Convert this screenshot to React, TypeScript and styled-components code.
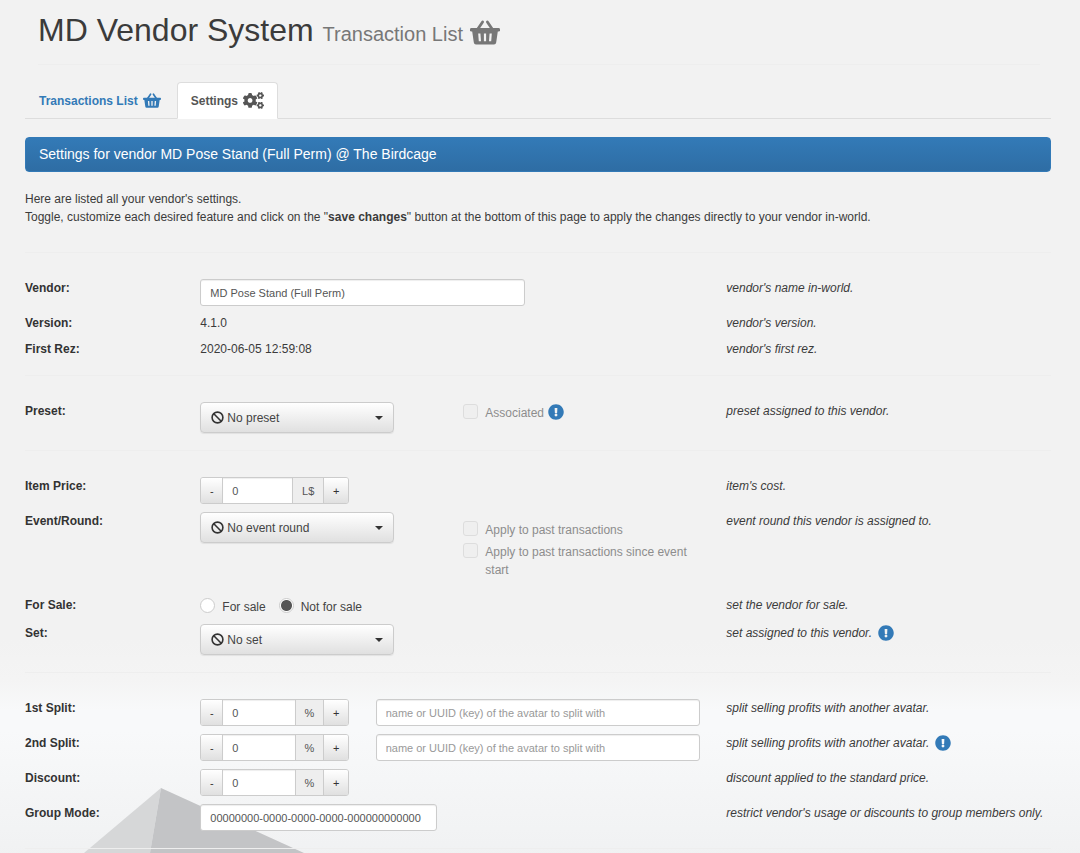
import React, { useState } from "react";
import styled, { createGlobalStyle } from "styled-components";
import { FaCogs, FaExclamationCircle } from "react-icons/fa";

const GlobalStyle = createGlobalStyle`
  *, *::before, *::after { box-sizing: border-box; }
  body {
    margin: 0;
    background: #f2f2f2;
    color: #3b3b3b;
    font-family: "Liberation Sans", Arial, Helvetica, sans-serif;
    font-size: 12px;
    line-height: 18px;
  }
  input, select, button { font-family: inherit; }
`;

const Page = styled.div`
  position: relative;
  padding: 13px 29px 4px 25px;
  overflow: hidden;
  background: linear-gradient(#f2f2f2 0, #f2f2f2 640px, #f4f4f4 680px, #f8f9fa 710px, #f8f9fa 730px, #f0f1f2 860px);
`;

const Backdrop = styled.svg`
  position: absolute;
  left: 84px;
  bottom: 0;
  width: 224px;
  height: 66px;
`;

const Content = styled.main`
  position: relative;
`;

const PageHeader = styled.header`
  margin: 0 11px 17px 13px;
  padding-bottom: 16px;
  border-bottom: 1px solid #eee;
`;

const Title = styled.h1`
  height: 35px;
  margin: 0;
  font-size: 32px;
  font-weight: 400;
  line-height: 35px;
  white-space: nowrap;
`;

const Subtitle = styled.small`
  font-size: 20px;
  color: #777;
  svg { margin-left: 7px; vertical-align: -4px; }
`;

const Tabs = styled.nav`
  display: flex;
  border-bottom: 1px solid #ddd;
`;

const Tab = styled.a<{ $active?: boolean }>`
  display: flex;
  align-items: center;
  gap: 5px;
  height: 37px;
  margin: 0 2px -1px 0;
  padding: 0 13px;
  border: 1px solid ${(p) => (p.$active ? "#ddd" : "transparent")};
  border-bottom-color: ${(p) => (p.$active ? "#fff" : "transparent")};
  border-radius: 4px 4px 0 0;
  background: ${(p) => (p.$active ? "#fff" : "transparent")};
  color: ${(p) => (p.$active ? "#555" : "#337ab7")};
  font-size: 12px;
  font-weight: 700;
  text-decoration: none;
  svg { flex: none; }
`;

const Heading = styled.h2`
  margin: 18px 0 18px;
  padding: 0 13px;
  border: 1px solid #337ab7;
  border-radius: 4px;
  background: linear-gradient(#337ab7, #2e6da4);
  color: #fff;
  font-size: 14px;
  font-weight: 400;
  line-height: 33px;
`;

const Intro = styled.p`
  margin: 0 0 26px;
`;

const Rule = styled.hr`
  height: 1px;
  margin: 17px 0 26px;
  border: 0;
  background: #eee;
  &:last-child { margin-bottom: 0; }
`;

const Row = styled.div<{ $min?: number }>`
  display: grid;
  grid-template-columns: repeat(12, minmax(0, 1fr));
  column-gap: 26px;
  align-items: start;
  min-height: ${(p) => p.$min ?? 18}px;
  margin-bottom: 8px;
`;

const Cell = styled.div<{ $from: number; $span: number; $top?: number }>`
  grid-column: ${(p) => p.$from} / span ${(p) => p.$span};
  padding-top: ${(p) => p.$top ?? 0}px;
`;

const Name = styled.label`
  grid-column: 1 / span 2;
  color: #333;
  font-weight: 700;
`;

const Hint = styled.em`
  grid-column: 9 / span 4;
  display: flex;
  align-items: center;
  gap: 6px;
  white-space: nowrap;
`;

const TextInput = styled.input`
  display: block;
  width: 100%;
  height: 27px;
  padding: 0 9px;
  border: 1px solid #ccc;
  border-radius: 3px;
  background: #fff;
  box-shadow: inset 0 1px 1px rgba(0, 0, 0, 0.07);
  color: #555;
  font-size: 11px;
  &::placeholder { color: #999; opacity: 1; }
`;

const SelectBox = styled.div`
  position: relative;
  width: 194px;
`;

const Select = styled.select`
  appearance: none;
  display: block;
  width: 100%;
  height: 31px;
  padding: 0 26px;
  border: 1px solid #ccc;
  border-radius: 4px;
  background: linear-gradient(#fff, #e0e0e0);
  box-shadow: 0 1px 1px rgba(0, 0, 0, 0.07);
  color: #444;
  font-size: 12px;
`;

const BanMark = styled.svg`
  position: absolute;
  left: 11px;
  top: 9px;
  pointer-events: none;
`;

const Caret = styled.span`
  position: absolute;
  right: 11px;
  top: 14px;
  border: 4px solid transparent;
  border-top-color: #333;
  border-bottom: 0;
  pointer-events: none;
`;

const Group = styled.div`
  display: flex;
  width: 149px;
  height: 27px;
  border: 1px solid #ccc;
  border-radius: 3px;
  overflow: hidden;
`;

const StepButton = styled.button`
  flex: 0 0 auto;
  padding: 0 8px;
  border: 0;
  background: linear-gradient(#fff, #e0e0e0);
  color: #333;
  font-size: 11px;
  &:first-child { width: 22px; border-right: 1px solid #ccc; }
  &:last-child { width: 25px; border-left: 1px solid #ccc; }
`;

const Amount = styled.input`
  flex: 1 1 0;
  min-width: 0;
  padding: 0 9px;
  border: 0;
  background: #fff;
  box-shadow: inset 0 1px 1px rgba(0, 0, 0, 0.07);
  color: #555;
  font-size: 11px;
`;

const Unit = styled.span`
  padding: 0 9px;
  border-left: 1px solid #ccc;
  background: #eee;
  color: #555;
  font-size: 11px;
  line-height: 26px;
`;

const Choice = styled.label<{ $disabled?: boolean }>`
  display: flex;
  align-items: flex-start;
  gap: 7px;
  margin-bottom: 4px;
  color: ${(p) => (p.$disabled ? "#8d8d8d" : "#444")};
  svg { flex: none; margin-left: -3px; }
`;

const Tick = styled.input`
  appearance: none;
  flex: none;
  width: 15px;
  height: 15px;
  margin: 0;
  border: 1px solid #ddd;
  border-radius: 3px;
  background: #efefef;
`;

const Radio = styled.input`
  appearance: none;
  flex: none;
  width: 15px;
  height: 15px;
  margin: 0;
  border: 1px solid #ccc;
  border-radius: 50%;
  background: #fff;
  &:checked { background: radial-gradient(circle, #555 0 5px, #fff 6px); }
`;

const Radios = styled.div`
  display: flex;
  gap: 13px;
  padding-top: 2px;
  ${Choice} { margin-bottom: 0; }
`;

const InfoIcon = () => <FaExclamationCircle size={16} color="#337ab7" />;

function Basket({ width, height }: { width: number; height: number }) {
  return (
    <svg width={width} height={height} viewBox="0 0 30 25" fill="currentColor" aria-hidden="true">
      <path d="M7.5 9.5 12.6 2M22.5 9.5 17.4 2" stroke="currentColor" strokeWidth="2.8" strokeLinecap="round" />
      <rect y="8" width="30" height="3.6" rx="1.4" />
      <path
        fillRule="evenodd"
        d="M2 10H28L26.2 22.4Q25.9 24.4 24 24.4H6Q4.1 24.4 3.8 22.4ZM8.2 13.4 8.8 21.2H11L10.4 13.4ZM13.9 13.4V21.2H16.1V13.4ZM19.6 13.4 19 21.2H21.2L21.8 13.4Z"
      />
    </svg>
  );
}

function Dropdown({ id, text }: { id: string; text: string }) {
  return (
    <SelectBox>
      <Select id={id}>
        <option>{text}</option>
      </Select>
      <BanMark width="13" height="13" viewBox="0 0 13 13" fill="none" stroke="#333">
        <circle cx="6.5" cy="6.5" r="5.4" strokeWidth="1.6" />
        <path d="M2.8 2.8 10.2 10.2" strokeWidth="1.6" />
      </BanMark>
      <Caret />
    </SelectBox>
  );
}

function Stepper({ id, unit }: { id: string; unit: string }) {
  const [value, setValue] = useState(0);
  return (
    <Group>
      <StepButton type="button" onClick={() => setValue(Math.max(0, value - 1))}>-</StepButton>
      <Amount id={id} value={value} onChange={(e) => setValue(Number(e.target.value) || 0)} />
      <Unit>{unit}</Unit>
      <StepButton type="button" onClick={() => setValue(value + 1)}>+</StepButton>
    </Group>
  );
}

export default function App() {
  return (
    <Page>
      <GlobalStyle />
      <Backdrop viewBox="0 0 224 66" aria-hidden="true">
        <path d="M77 1 0 66H66Z" fill="#d6d7d8" />
        <path d="M77 1 66 66H220Z" fill="#c3c4c6" />
      </Backdrop>
      <Content>
        <PageHeader>
          <Title>
            MD Vendor System <Subtitle>Transaction List<Basket width={30} height={25} /></Subtitle>
          </Title>
        </PageHeader>

        <Tabs>
          <Tab href="#transactions">Transactions List<Basket width={18} height={15} /></Tab>
          <Tab href="#settings" $active>Settings<FaCogs size={21} /></Tab>
        </Tabs>

        <Heading>Settings for vendor MD Pose Stand (Full Perm) @ The Birdcage</Heading>

        <Intro>
          Here are listed all your vendor's settings.
          <br />
          Toggle, customize each desired feature and click on the "<b>save changes</b>" button at the bottom of this page to
          apply the changes directly to your vendor in-world.
        </Intro>

        <Rule />
        <Row>
          <Name htmlFor="vendor">Vendor:</Name>
          <Cell $from={3} $span={4}><TextInput id="vendor" defaultValue="MD Pose Stand (Full Perm)" /></Cell>
          <Hint>vendor's name in-world.</Hint>
        </Row>
        <Row>
          <Name as="strong">Version:</Name>
          <Cell $from={3} $span={4}>4.1.0</Cell>
          <Hint>vendor's version.</Hint>
        </Row>
        <Row>
          <Name as="strong">First Rez:</Name>
          <Cell $from={3} $span={4}>2020-06-05 12:59:08</Cell>
          <Hint>vendor's first rez.</Hint>
        </Row>

        <Rule />
        <Row>
          <Name htmlFor="preset">Preset:</Name>
          <Cell $from={3} $span={3}><Dropdown id="preset" text="No preset" /></Cell>
          <Cell $from={6} $span={3} $top={2}>
            <Choice $disabled><Tick type="checkbox" disabled />Associated <InfoIcon /></Choice>
          </Cell>
          <Hint>preset assigned to this vendor.</Hint>
        </Row>

        <Rule />
        <Row>
          <Name htmlFor="price">Item Price:</Name>
          <Cell $from={3} $span={3}><Stepper id="price" unit="L$" /></Cell>
          <Hint>item's cost.</Hint>
        </Row>
        <Row $min={76}>
          <Name htmlFor="event">Event/Round:</Name>
          <Cell $from={3} $span={3}><Dropdown id="event" text="No event round" /></Cell>
          <Cell $from={6} $span={3} $top={9}>
            <Choice $disabled><Tick type="checkbox" disabled />Apply to past transactions</Choice>
            <Choice $disabled><Tick type="checkbox" disabled />Apply to past transactions since event start</Choice>
          </Cell>
          <Hint>event round this vendor is assigned to.</Hint>
        </Row>
        <Row $min={20}>
          <Name as="strong">For Sale:</Name>
          <Cell $from={3} $span={3}>
            <Radios>
              <Choice><Radio type="radio" name="sale" />For sale</Choice>
              <Choice><Radio type="radio" name="sale" defaultChecked />Not for sale</Choice>
            </Radios>
          </Cell>
          <Hint>set the vendor for sale.</Hint>
        </Row>
        <Row>
          <Name htmlFor="set">Set:</Name>
          <Cell $from={3} $span={3}><Dropdown id="set" text="No set" /></Cell>
          <Hint>set assigned to this vendor. <InfoIcon /></Hint>
        </Row>

        <Rule />
        <Row>
          <Name htmlFor="split1">1st Split:</Name>
          <Cell $from={3} $span={2}><Stepper id="split1" unit="%" /></Cell>
          <Cell $from={5} $span={4}><TextInput aria-label="1st split avatar" placeholder="name or UUID (key) of the avatar to split with" /></Cell>
          <Hint>split selling profits with another avatar.</Hint>
        </Row>
        <Row>
          <Name htmlFor="split2">2nd Split:</Name>
          <Cell $from={3} $span={2}><Stepper id="split2" unit="%" /></Cell>
          <Cell $from={5} $span={4}><TextInput aria-label="2nd split avatar" placeholder="name or UUID (key) of the avatar to split with" /></Cell>
          <Hint>split selling profits with another avatar. <InfoIcon /></Hint>
        </Row>
        <Row>
          <Name htmlFor="discount">Discount:</Name>
          <Cell $from={3} $span={2}><Stepper id="discount" unit="%" /></Cell>
          <Hint>discount applied to the standard price.</Hint>
        </Row>
        <Row>
          <Name htmlFor="group">Group Mode:</Name>
          <Cell $from={3} $span={3}><TextInput id="group" defaultValue="00000000-0000-0000-0000-000000000000" /></Cell>
          <Hint>restrict vendor's usage or discounts to group members only.</Hint>
        </Row>
        <Rule />
      </Content>
    </Page>
  );
}
